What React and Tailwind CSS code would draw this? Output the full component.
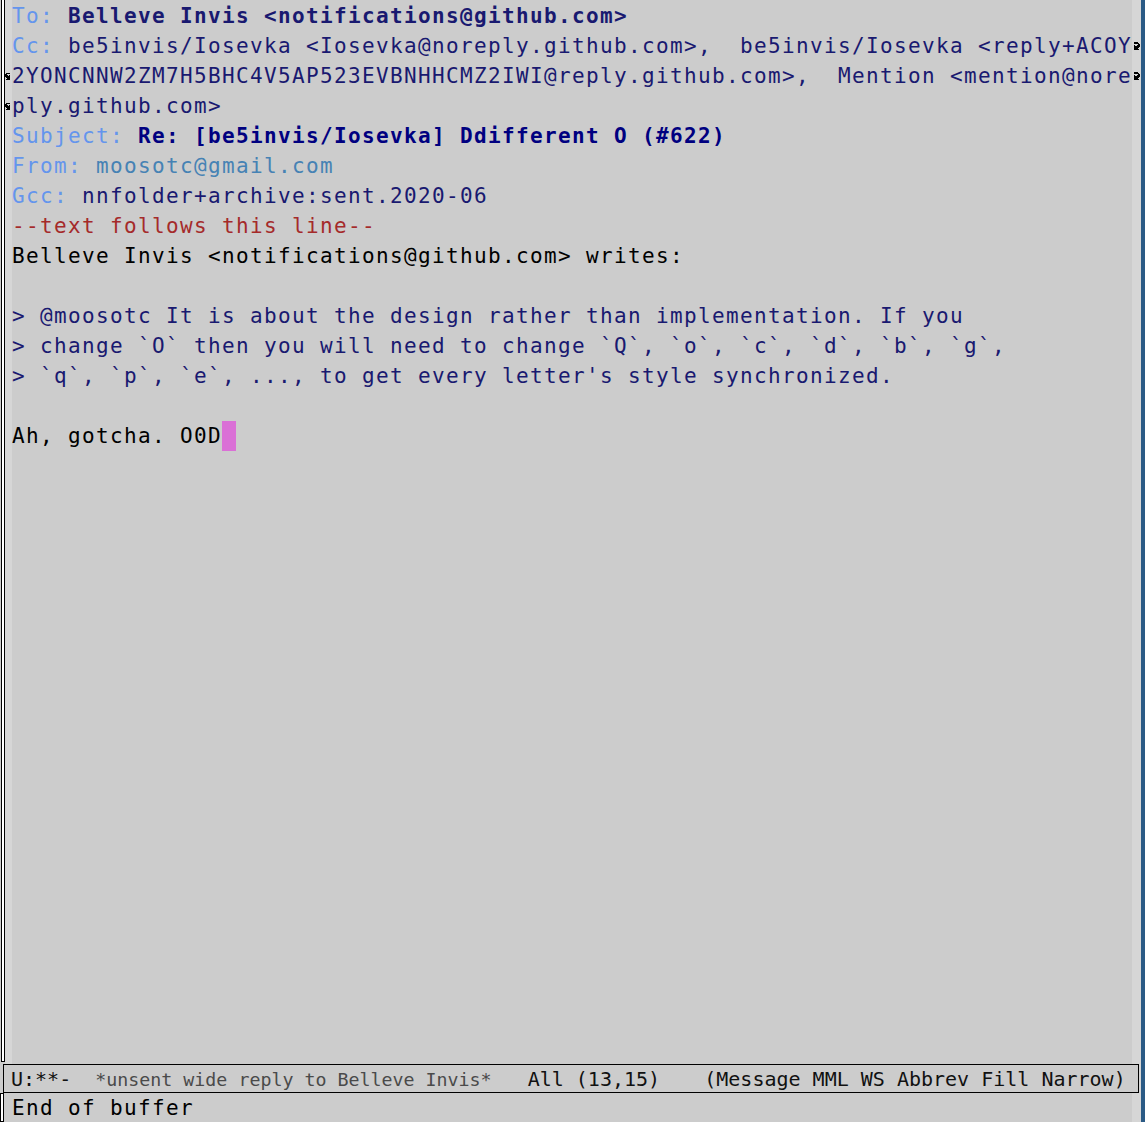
import React from "react";

const LEFT_CURLY = [0x3c, 0x7c, 0xc0, 0xe4, 0xfc, 0x7c, 0x3c, 0x7c];
const RIGHT_CURLY = [0x3c, 0x3e, 0x03, 0x27, 0x3f, 0x3e, 0x3c, 0x3e];

function Bitmap({ bits }) {
  const rects = [];
  bits.forEach((row, y) => {
    for (let x = 0; x < 8; x++) {
      if (row & (0x80 >> x)) rects.push(<rect key={y + "-" + x} x={x} y={y} width="1" height="1" />);
    }
  });
  return (
    <svg width="8" height="8" viewBox="0 0 8 8" shapeRendering="crispEdges" fill="#000">
      {rects}
    </svg>
  );
}

const L = "text-[#6495ed]";
const NAVY = "text-[#191970]";

const lines = [
  { segs: [["To: ", L], ["Belleve Invis <notifications@github.com>", "text-[#191970] font-bold"]] },
  {
    segs: [["Cc: ", L], ["be5invis/Iosevka <Iosevka@noreply.github.com>,  be5invis/Iosevka <reply+ACOY", NAVY]],
    right: true,
  },
  {
    segs: [["2YONCNNW2ZM7H5BHC4V5AP523EVBNHHCMZ2IWI@reply.github.com>,  Mention <mention@nore", NAVY]],
    left: true,
    right: true,
  },
  { segs: [["ply.github.com>", NAVY]], left: true },
  { segs: [["Subject: ", L], ["Re: [be5invis/Iosevka] Ddifferent O (#622)", "text-[#000080] font-bold"]] },
  { segs: [["From: ", L], ["moosotc@gmail.com", "text-[#4682b4]"]] },
  { segs: [["Gcc: ", L], ["nnfolder+archive:sent.2020-06", NAVY]] },
  { segs: [["--text follows this line--", "text-[#a52a2a]"]] },
  { segs: [["Belleve Invis <notifications@github.com> writes:", "text-black"]] },
  { segs: [] },
  { segs: [["> @moosotc It is about the design rather than implementation. If you", NAVY]] },
  { segs: [["> change `O` then you will need to change `Q`, `o`, `c`, `d`, `b`, `g`,", NAVY]] },
  { segs: [["> `q`, `p`, `e`, ..., to get every letter's style synchronized.", NAVY]] },
  { segs: [] },
  { segs: [["Ah, gotcha. O0D", "text-black"]], cursor: true },
];

const FONT = "font-['DejaVu_Sans_Mono',monospace]";

export default function App() {
  return (
    <div className={`flex h-[1122px] w-[1145px] overflow-hidden bg-[#cccccc] ${FONT}`}>
      <div className="flex w-[1141px] flex-col">
        {/* main window */}
        <div className="flex h-[1064px]">
          <div className="ml-px h-[1062px] w-[4px] border-x border-b border-black bg-white" />
          <div className="flex w-[7px] flex-col bg-[#d6d6d6] pt-px">
            {lines.map((ln, i) => (
              <div key={i} className="flex h-[30px] items-center justify-center">
                {ln.left ? <Bitmap bits={LEFT_CURLY} /> : null}
              </div>
            ))}
          </div>
          <div className="flex w-[1120px] flex-col overflow-hidden pt-px text-[21px] leading-[30px] tracking-[1.357px]">
            {lines.map((ln, i) => (
              <div key={i} className="flex h-[30px] whitespace-pre">
                {ln.segs.map((s, j) => (
                  <span key={j} className={s[1]}>
                    {s[0]}
                  </span>
                ))}
                {ln.cursor ? <span className="h-[30px] w-[14px] bg-[#da70d6]" /> : null}
              </div>
            ))}
          </div>
          <div className="flex w-[9px] flex-col bg-[#d6d6d6] pt-px">
            {lines.map((ln, i) => (
              <div key={i} className="flex h-[30px] items-center justify-start">
                {ln.right ? <Bitmap bits={RIGHT_CURLY} /> : null}
              </div>
            ))}
          </div>
        </div>
        {/* mode line */}
        <div className="flex h-[29px]">
          <div className="ml-[3px] flex w-[1136px] items-center border border-black bg-[#cccccc] pl-[7px] pt-px text-[20px] leading-[27px] whitespace-pre text-[#111]">
            <span>{"U:**-  "}</span>
            <span className="text-[18.3px] text-[#4a4a4a]">*unsent wide reply to Belleve Invis*</span>
            <span>{"   All (13,15)   "}</span>
            <span className="w-[8px]" />
            <span>{"(Message MML WS Abbrev Fill Narrow)"}</span>
          </div>
          <div className="w-[2px] bg-[#d6d6d6]" />
        </div>
        {/* echo area */}
        <div className="flex h-[29px]">
          <div className="h-[29px] w-[4px] border-x border-y border-black bg-white" />
          <div className="w-[8px]" />
          <div className="w-[1120px] pt-px text-[21px] leading-[29px] tracking-[1.357px] whitespace-pre text-black">
            End of buffer
          </div>
          <div className="w-[9px] bg-[#d6d6d6]" />
        </div>
      </div>
      <div className="w-[4px] bg-[#2b5a85]" />
    </div>
  );
}
